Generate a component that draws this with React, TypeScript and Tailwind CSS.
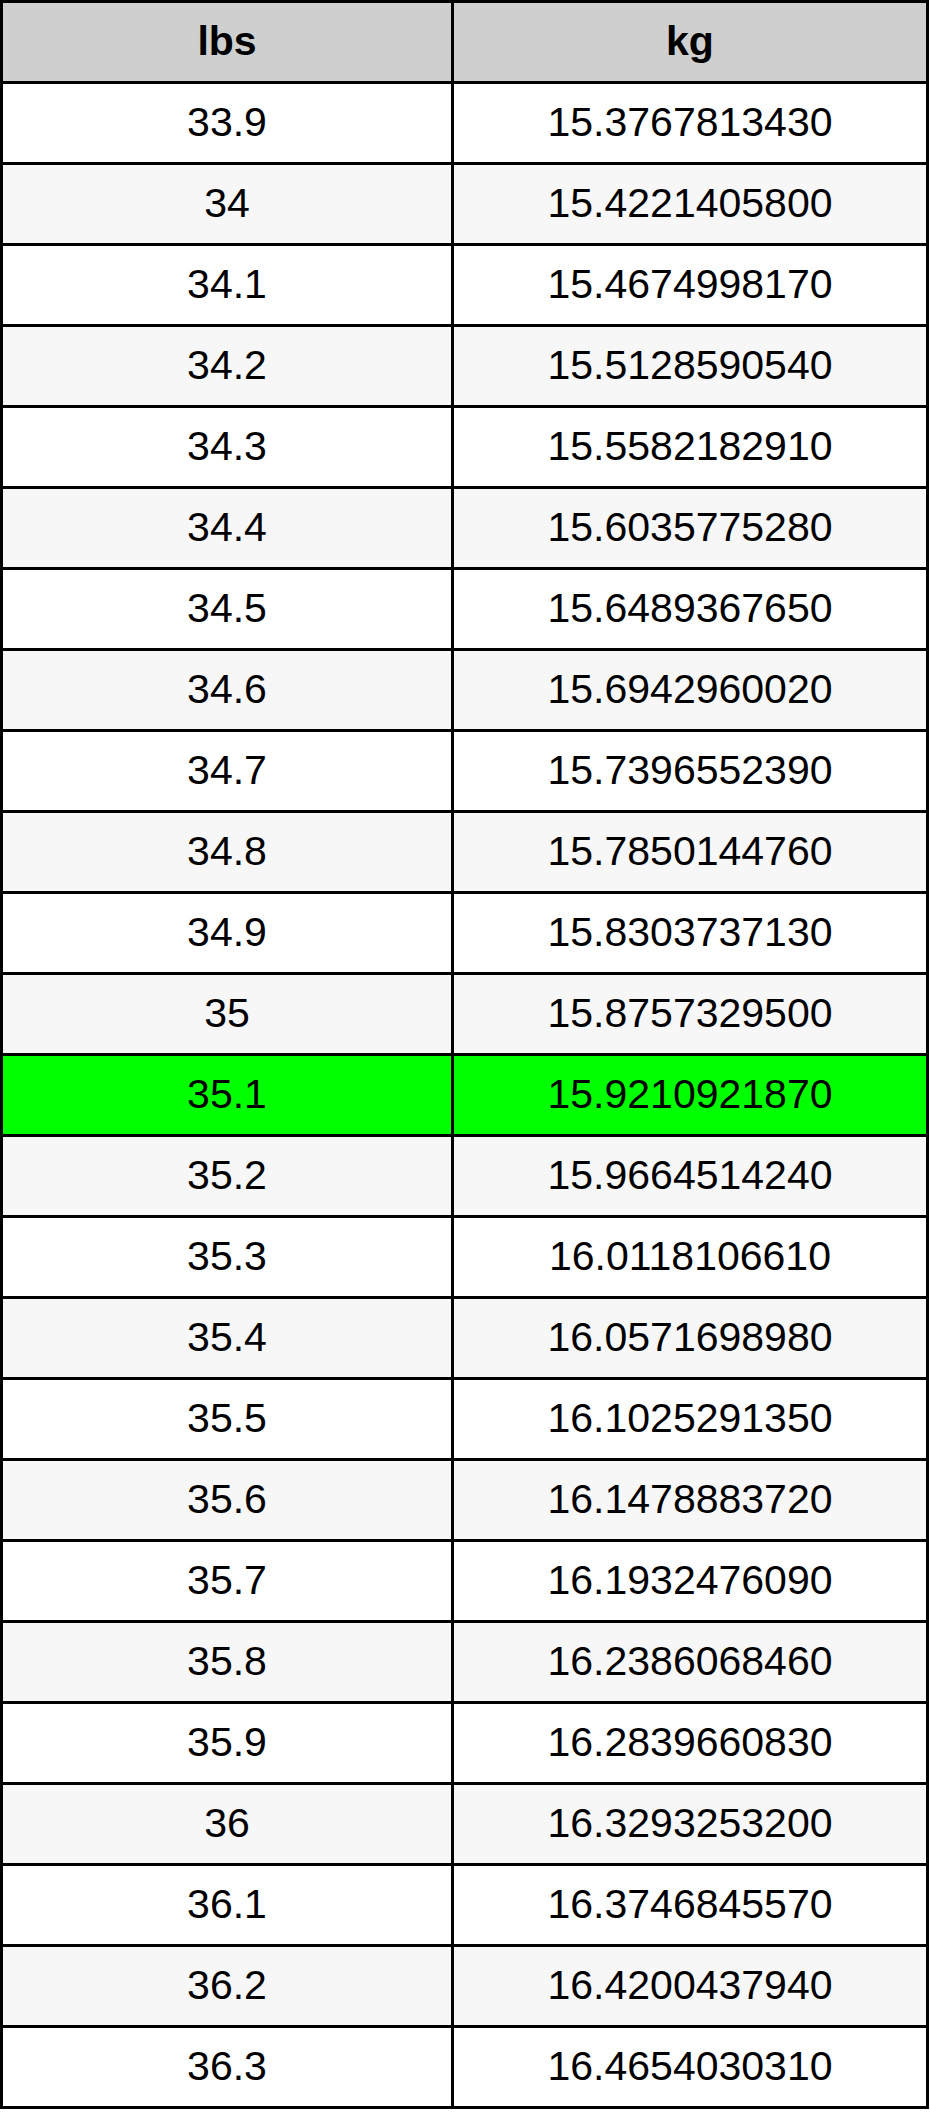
const rows: [string, string][] = [
  ["33.9", "15.3767813430"],
  ["34", "15.4221405800"],
  ["34.1", "15.4674998170"],
  ["34.2", "15.5128590540"],
  ["34.3", "15.5582182910"],
  ["34.4", "15.6035775280"],
  ["34.5", "15.6489367650"],
  ["34.6", "15.6942960020"],
  ["34.7", "15.7396552390"],
  ["34.8", "15.7850144760"],
  ["34.9", "15.8303737130"],
  ["35", "15.8757329500"],
  ["35.1", "15.9210921870"],
  ["35.2", "15.9664514240"],
  ["35.3", "16.0118106610"],
  ["35.4", "16.0571698980"],
  ["35.5", "16.1025291350"],
  ["35.6", "16.1478883720"],
  ["35.7", "16.1932476090"],
  ["35.8", "16.2386068460"],
  ["35.9", "16.2839660830"],
  ["36", "16.3293253200"],
  ["36.1", "16.3746845570"],
  ["36.2", "16.4200437940"],
  ["36.3", "16.4654030310"],
];

const highlight = "35.1";

const App = () => {
  return (
    <div className="bg-white font-['Liberation_Sans',Arial,sans-serif] text-black">
      <table className="border-separate border-spacing-0 border-l-[3px] border-t-[3px] border-black">
        <thead>
          <tr className="bg-[#cfcfcf]">
            <th className="p-0 border-r-[3px] border-b-[3px] border-black">
              <div className="w-[448px] h-[78px] flex items-center justify-center text-[41px] font-bold">
                lbs
              </div>
            </th>
            <th className="p-0 border-r-[3px] border-b-[3px] border-black">
              <div className="w-[472px] h-[78px] flex items-center justify-center text-[41px] font-bold">
                kg
              </div>
            </th>
          </tr>
        </thead>
        <tbody>
          {rows.map(([lbs, kg], i) => {
            const bg =
              lbs === highlight
                ? "bg-[#00ff00]"
                : i % 2 === 0
                ? "bg-white"
                : "bg-[#f7f7f7]";
            return (
              <tr key={lbs} className={bg}>
                <td className="p-0 border-r-[3px] border-b-[3px] border-black">
                  <div className="w-[448px] h-[78px] flex items-center justify-center text-[41px]">
                    {lbs}
                  </div>
                </td>
                <td className="p-0 border-r-[3px] border-b-[3px] border-black">
                  <div className="w-[472px] h-[78px] flex items-center justify-center text-[41px]">
                    {kg}
                  </div>
                </td>
              </tr>
            );
          })}
        </tbody>
      </table>
    </div>
  );
};

export default App;
